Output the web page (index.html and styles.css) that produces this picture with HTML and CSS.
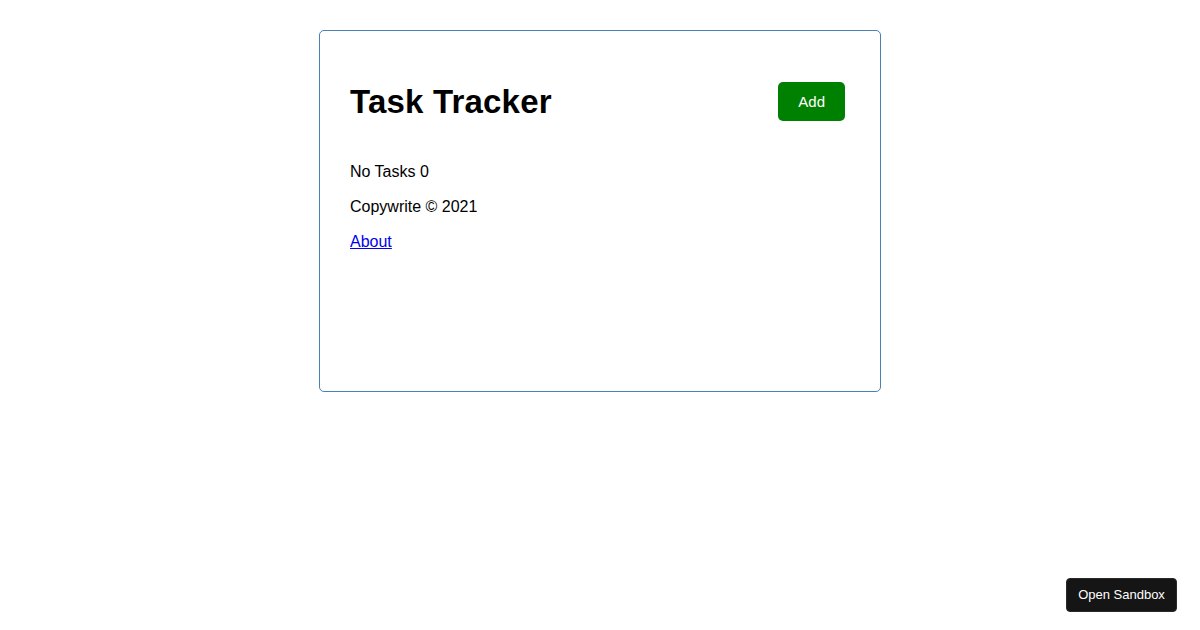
FILE: index.html
```html
<!DOCTYPE html>
<html>
<head>
<meta charset="utf-8">
<link rel="stylesheet" href="styles.css">
</head>
<body>
<div class="container">
  <header class="header">
    <h1 class="title">Task Tracker</h1>
    <button class="btn">Add</button>
  </header>
  <p class="line">No Tasks 0</p>
  <footer class="footer">
    <p class="line">Copywrite &copy; 2021</p>
    <a class="link" href="#">About</a>
  </footer>
</div>
<a class="sandbox" href="#">Open Sandbox</a>
</body>
</html>
```
FILE: styles.css
```css
body {
  margin: 0;
  font-family: "Liberation Sans", Arial, sans-serif;
  font-size: 16px;
  color: #000;
  background: #fff;
}
.container {
  max-width: 500px;
  margin: 30px auto;
  min-height: 300px;
  border: 1px solid steelblue;
  padding: 30px;
  border-radius: 5px;
  overflow: auto;
}
.header {
  display: flex;
  justify-content: space-between;
  align-items: center;
  margin-bottom: 21px;
}
.title {
  font-size: 33px;
  letter-spacing: 0.2px;
  line-height: 37px;
  margin: 21.5px 0;
  font-weight: bold;
}
.btn {
  display: inline-block;
  background: green;
  color: #fff;
  border: none;
  padding: 10px 20px;
  margin: 5px;
  border-radius: 5px;
  font-size: 15px;
  line-height: 19px;
  font-family: inherit;
  cursor: pointer;
}
.line {
  margin: 16px 0;
  line-height: 19px;
}
.link {
  color: #0000ee;
  line-height: 19px;
}
.sandbox {
  position: fixed;
  right: 23px;
  bottom: 18px;
  height: 34px;
  width: 111px;
  box-sizing: border-box;
  display: flex;
  align-items: center;
  justify-content: center;
  padding-bottom: 1px;
  background: #151515;
  color: #fff;
  border-radius: 4px;
  font-size: 13px;
  text-decoration: none;
  border: 1px solid #2a2a2a;
}
```
